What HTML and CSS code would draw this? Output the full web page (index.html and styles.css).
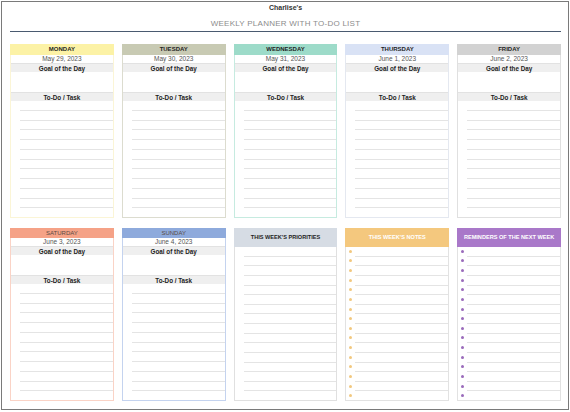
FILE: index.html
```html
<!DOCTYPE html>
<html>
<head>
<meta charset="utf-8">
<link rel="stylesheet" href="styles.css">
</head>
<body>
<div class="frame">
  <div class="owner">Charlise's</div>
  <div class="title">WEEKLY PLANNER WITH TO-DO LIST</div>
  <div class="rule"></div>
  <div class="grid">
    <div class="card mon">
      <div class="head">MONDAY</div>
      <div class="body">
        <div class="date">May 29, 2023</div>
        <div class="label">Goal of the Day</div>
        <div class="blank"></div>
        <div class="label">To-Do / Task</div>
        <div class="lines"><i></i><i></i><i></i><i></i><i></i><i></i><i></i><i></i><i></i><i></i><i></i><i></i></div>
      </div>
    </div>
    <div class="card tue">
      <div class="head">TUESDAY</div>
      <div class="body">
        <div class="date">May 30, 2023</div>
        <div class="label">Goal of the Day</div>
        <div class="blank"></div>
        <div class="label">To-Do / Task</div>
        <div class="lines"><i></i><i></i><i></i><i></i><i></i><i></i><i></i><i></i><i></i><i></i><i></i><i></i></div>
      </div>
    </div>
    <div class="card wed">
      <div class="head">WEDNESDAY</div>
      <div class="body">
        <div class="date">May 31, 2023</div>
        <div class="label">Goal of the Day</div>
        <div class="blank"></div>
        <div class="label">To-Do / Task</div>
        <div class="lines"><i></i><i></i><i></i><i></i><i></i><i></i><i></i><i></i><i></i><i></i><i></i><i></i></div>
      </div>
    </div>
    <div class="card thu">
      <div class="head">THURSDAY</div>
      <div class="body">
        <div class="date">June 1, 2023</div>
        <div class="label">Goal of the Day</div>
        <div class="blank"></div>
        <div class="label">To-Do / Task</div>
        <div class="lines"><i></i><i></i><i></i><i></i><i></i><i></i><i></i><i></i><i></i><i></i><i></i><i></i></div>
      </div>
    </div>
    <div class="card fri">
      <div class="head">FRIDAY</div>
      <div class="body">
        <div class="date">June 2, 2023</div>
        <div class="label">Goal of the Day</div>
        <div class="blank"></div>
        <div class="label">To-Do / Task</div>
        <div class="lines"><i></i><i></i><i></i><i></i><i></i><i></i><i></i><i></i><i></i><i></i><i></i><i></i></div>
      </div>
    </div>
    <div class="card sat">
      <div class="head light">SATURDAY</div>
      <div class="body">
        <div class="date">June 3, 2023</div>
        <div class="label">Goal of the Day</div>
        <div class="blank"></div>
        <div class="label">To-Do / Task</div>
        <div class="lines"><i></i><i></i><i></i><i></i><i></i><i></i><i></i><i></i><i></i><i></i><i></i><i></i></div>
      </div>
    </div>
    <div class="card sun">
      <div class="head light">SUNDAY</div>
      <div class="body">
        <div class="date">June 4, 2023</div>
        <div class="label">Goal of the Day</div>
        <div class="blank"></div>
        <div class="label">To-Do / Task</div>
        <div class="lines"><i></i><i></i><i></i><i></i><i></i><i></i><i></i><i></i><i></i><i></i><i></i><i></i></div>
      </div>
    </div>
    <div class="card list prio">
      <div class="head big">THIS WEEK'S PRIORITIES</div>
      <div class="body">
        <div class="lines"><i></i><i></i><i></i><i></i><i></i><i></i><i></i><i></i><i></i><i></i><i></i><i></i><i></i><i></i><i></i><i></i></div>
      </div>
    </div>
    <div class="card list notes">
      <div class="head big white">THIS WEEK'S NOTES</div>
      <div class="body">
        <div class="lines dots"><i></i><i></i><i></i><i></i><i></i><i></i><i></i><i></i><i></i><i></i><i></i><i></i><i></i><i></i><i></i><i></i></div>
      </div>
    </div>
    <div class="card list rem">
      <div class="head big white">REMINDERS OF THE NEXT WEEK</div>
      <div class="body">
        <div class="lines dots"><i></i><i></i><i></i><i></i><i></i><i></i><i></i><i></i><i></i><i></i><i></i><i></i><i></i><i></i><i></i><i></i></div>
      </div>
    </div>
  </div>
</div>
</body>
</html>
```

FILE: styles.css
```css
* { box-sizing: border-box; }
html, body { margin: 0; padding: 0; background: #fff; }
body { font-family: "Liberation Sans", Arial, sans-serif; color: #222; }

.frame {
  margin: 1px 0 0 1px;
  width: 568px;
  height: 409px;
  border: 1px solid #7a7a7a;
  padding: 0 7px 8px 8px;
  display: flex;
  flex-direction: column;
}

.owner {
  height: 12px;
  line-height: 12px;
  text-align: center;
  font-size: 7px;
  font-weight: bold;
  color: #333;
}
.title {
  margin-top: 3px;
  height: 13px;
  line-height: 13px;
  text-align: center;
  font-size: 8px;
  letter-spacing: 0.25px;
  color: #8c8c8c;
}
.rule {
  margin-top: 1px;
  height: 1px;
  background: #4a5a70;
}

.grid {
  margin-top: 12px;
  flex: 1;
  display: grid;
  grid-template-columns: repeat(5, 1fr);
  grid-template-rows: 174px 173px;
  column-gap: 8px;
  row-gap: 10px;
}

.card { display: flex; flex-direction: column; min-height: 0; }
.head {
  height: 11px;
  line-height: 11px;
  text-align: center;
  font-size: 6px;
  font-weight: bold;
  color: #1e1e1e;
}
.head.light { font-weight: normal; color: #5a4a44; height: 10px; line-height: 10px; }
.head.big { height: 19px; line-height: 19px; font-size: 5.6px; }
.head.white { color: #fff; }

.body {
  flex: 1;
  display: flex;
  flex-direction: column;
  border: 1px solid #ddd;
  border-top: none;
  min-height: 0;
}
.date {
  height: 8px;
  line-height: 8px;
  text-align: center;
  font-size: 6.5px;
  color: #555;
}
.label {
  height: 9px;
  line-height: 9px;
  text-align: center;
  font-size: 6.3px;
  font-weight: bold;
  color: #222;
  background: #efefef;
  border-top: 1px solid #e2e2e2;
}
.blank { height: 20px; }

.lines { flex: 1; display: flex; flex-direction: column; }
.lines i {
  display: block;
  flex: 1;
  margin-left: 9px;
  border-bottom: 1px solid #e4e4e4;
  position: relative;
}
.lines i:last-child { border-bottom: none; }
.dots i::before {
  content: "";
  position: absolute;
  left: -6px;
  top: 50%;
  width: 3px;
  height: 3px;
  margin-top: -1.5px;
  border-radius: 50%;
}

.mon .head { background: #fcf2a6; }
.mon .body { border-color: #fbf5d6; }
.tue .head { background: #c8cab3; }
.tue .body { border-color: #dcdccf; }
.wed .head { background: #9ddbc9; }
.wed .body { border-color: #c6ebe0; }
.thu .head { background: #d9e2f5; }
.thu .body { border-color: #e4e8f0; }
.fri .head { background: #d2d2d2; }
.fri .body { border-color: #e0e0e0; }
.sat .head { background: #f5a287; }
.sat .body { border-color: #fad3c6; }
.sun .head { background: #8eaadc; }
.sun .body { border-color: #c4d3ef; }
.prio .head { background: #d6dce4; }
.prio .body { border-color: #e0e0e0; }
.notes .head { background: #f4c87e; }
.notes .body { border-color: #e2e2e2; }
.notes .dots i::before { background: #f2c87f; }
.rem .head { background: #a978c9; }
.rem .body { border-color: #e2e2e2; }
.rem .dots i::before { background: #9a6bbb; }
```
